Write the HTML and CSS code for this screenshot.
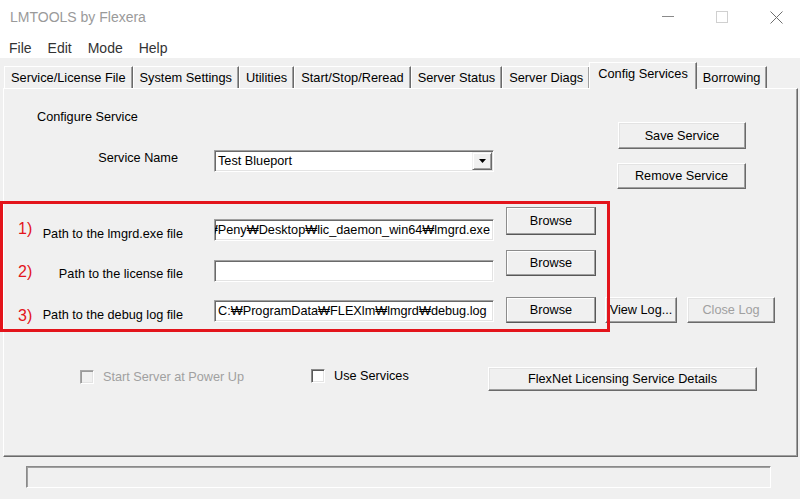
FILE: index.html
```html
<!DOCTYPE html>
<html lang="en">
<head>
<meta charset="utf-8">
<title>LMTOOLS by Flexera</title>
<link rel="stylesheet" href="styles.css">
</head>
<body>
<div class="window">
  <div class="titlebar">
    <span class="title">LMTOOLS by Flexera</span>
    <div class="controls">
      <svg class="ctl" width="12" height="12" viewBox="0 0 12 12"><path d="M0 5.5H12" stroke="#8a8a8a" stroke-width="1"/></svg>
      <svg class="ctl" width="12" height="12" viewBox="0 0 12 12"><rect x="0.5" y="0.5" width="11" height="11" fill="none" stroke="#d0d0d0" stroke-width="1"/></svg>
      <svg class="ctl" width="13" height="13" viewBox="0 0 13 13"><path d="M0.5 0.5L12.5 12.5M12.5 0.5L0.5 12.5" stroke="#6e6e6e" stroke-width="1"/></svg>
    </div>
  </div>

  <div class="menubar">
    <span>File</span><span>Edit</span><span>Mode</span><span>Help</span>
  </div>

  <div class="tabstrip">
    <div class="tab">Service/License File</div>
    <div class="tab">System Settings</div>
    <div class="tab">Utilities</div>
    <div class="tab">Start/Stop/Reread</div>
    <div class="tab">Server Status</div>
    <div class="tab">Server Diags</div>
    <div class="tab active">Config Services</div>
    <div class="tab">Borrowing</div>
  </div>

  <div class="panel">
    <div class="top">
      <div class="top-left">
        <div class="cfg-title">Configure Service</div>
        <div class="svc-row">
          <div class="svc-label">Service Name</div>
          <div class="field combo">
            <span class="combo-text">Test Blueport</span>
            <span class="combo-btn"><svg width="7" height="4" viewBox="0 0 7 4"><path d="M0 0H7L3.5 4Z" fill="#000"/></svg></span>
          </div>
        </div>
      </div>
      <div class="top-right">
        <div class="btn save">Save Service</div>
        <div class="btn remove">Remove Service</div>
      </div>
    </div>

    <div class="path-row r1">
      <span class="num">1)</span>
      <span class="plabel">Path to the lmgrd.exe file</span>
      <div class="field scroll"><span class="ftext">C:₩Users₩Peny₩Desktop₩lic_daemon_win64₩lmgrd.exe</span></div>
      <div class="btn browse">Browse</div>
    </div>

    <div class="path-row r2">
      <span class="num">2)</span>
      <span class="plabel">Path to the license file</span>
      <div class="field"></div>
      <div class="btn browse">Browse</div>
    </div>

    <div class="path-row r3">
      <span class="num">3)</span>
      <span class="plabel">Path to the debug log file</span>
      <div class="field"><span class="ftext">C:₩ProgramData₩FLEXlm₩lmgrd₩debug.log</span></div>
      <div class="btn browse">Browse</div>
      <div class="btn view">View Log...</div>
      <div class="btn closelog">Close Log</div>
    </div>

    <div class="check-row">
      <label class="check disabled"><span class="box"></span><span>Start Server at Power Up</span></label>
      <label class="check uses"><span class="box"></span><span>Use Services</span></label>
      <div class="btn flexnet">FlexNet Licensing Service Details</div>
    </div>
  </div>

  <div class="statusbar"><div class="status-box"></div></div>

  <div class="annot"></div>
</div>
</body>
</html>
```

FILE: styles.css
```css
html, body {
  margin: 0;
  padding: 0;
}
body {
  width: 800px;
  height: 499px;
  overflow: hidden;
  background: #f0f0f0;
  font-family: "Liberation Sans", Arial, "Noto Sans CJK KR", sans-serif;
  font-size: 12.7px;
  color: #000;
}
.window {
  position: relative;
  height: 499px;
}

/* title bar */
.titlebar {
  height: 34px;
  background: #fff;
  display: flex;
  align-items: center;
  padding-left: 10px;
}
.title {
  font-size: 14px;
  color: #9a9a9a;
}
.controls {
  margin-left: auto;
  display: flex;
  align-items: center;
  gap: 42px;
  padding-right: 17px;
}
.ctl { display: block; }

/* menu */
.menubar {
  height: 24px;
  box-sizing: border-box;
  padding: 4px 0 0 9px;
  line-height: 20px;
  background: #fff;
  display: flex;
  gap: 16px;
  font-size: 14px;
  color: #333;
}

/* tabs */
.tabstrip {
  height: 30px;
  box-sizing: border-box;
  display: flex;
  align-items: flex-end;
  padding-left: 4px;
  font-size: 12.8px;
}
.tab {
  height: 22px;
  box-sizing: border-box;
  line-height: 21px;
  padding: 0 6px;
  border: 1px solid;
  border-bottom: none;
  border-color: #fff #6a6a6a transparent #fff;
  box-shadow: inset -1px 0 #a0a0a0;
  white-space: nowrap;
}
.tab.active {
  position: relative;
  height: 27px;
  line-height: 22px;
  padding: 0 8px;
  margin: 0 -1px -1px;
  background: #f0f0f0;
}

/* panel */
.panel {
  height: 369px;
  box-sizing: border-box;
  margin: 0 2px 0 3px;
  border: 1px solid;
  border-color: #fff #6a6a6a #6a6a6a #fff;
  box-shadow: inset -1px -1px #a0a0a0;
}
.top {
  display: flex;
  height: 118px;
}
.top-left {
  width: 614px;
}
.cfg-title {
  padding: 20px 0 0 33px;
  line-height: 16px;
}
.svc-row {
  display: flex;
  margin-top: 25px;
}
.svc-label {
  width: 174px;
  text-align: right;
  line-height: 16px;
}
.top-right {
  display: flex;
  flex-direction: column;
  padding-top: 33px;
}

/* fields */
.field {
  width: 280px;
  height: 22px;
  box-sizing: border-box;
  background: #fff;
  border: 1px solid;
  border-color: #a0a0a0 #fff #fff #a0a0a0;
  box-shadow: inset 1px 1px #6a6a6a, inset -1px -1px #e3e3e3;
  display: flex;
  align-items: center;
  padding: 0 3px;
  overflow: hidden;
  white-space: nowrap;
}
.field.scroll {
  justify-content: flex-end;
}
.combo {
  margin-left: 36px;
  padding-right: 1px;
  align-items: stretch;
}
.combo-text {
  flex: 1;
  display: flex;
  align-items: center;
}
.combo-btn {
  width: 20px;
  margin: 1px 0;
  box-sizing: border-box;
  background: #f0f0f0;
  border: 1px solid;
  border-color: #f0f0f0 #6a6a6a #6a6a6a #f0f0f0;
  box-shadow: inset 1px 1px #fff, inset -1px -1px #a0a0a0;
  display: flex;
  align-items: center;
  justify-content: center;
}
.combo-btn svg { display: block; }

/* buttons */
.btn {
  box-sizing: border-box;
  height: 26px;
  background: #f0f0f0;
  border: 1px solid;
  border-color: #fff #6a6a6a #6a6a6a #fff;
  box-shadow: inset -1px -1px #a0a0a0, inset 1px 1px #e3e3e3;
  display: flex;
  align-items: center;
  justify-content: center;
  white-space: nowrap;
}
.save {
  width: 128px;
  height: 27px;
}
.remove {
  width: 129px;
  margin: 14px 0 0 -1px;
}

/* path rows */
.path-row {
  display: flex;
  align-items: flex-end;
  padding-left: 14px;
}
.r1 { height: 35px; }
.r2 { height: 32px; margin-top: 8px; }
.r3 { height: 26px; margin-top: 15px; }
.num {
  width: 22px;
  color: #e3141b;
  font-size: 16px;
  line-height: 20px;
}
.r1 .num { margin-bottom: 3px; }
.r3 .num { margin-bottom: -3px; }
.plabel {
  width: 143px;
  text-align: right;
  line-height: 16px;
}
.path-row .field {
  margin-left: 31px;
}
.r1 .field { margin-bottom: 1px; }
.r3 .field { margin-bottom: 1px; }
.path-row .btn {
  align-self: flex-start;
}
.browse {
  margin-left: 12px;
  width: 90px;
  border-color: #8c8c8c #585858 #585858 #8c8c8c;
  box-shadow: inset -1px -1px #a0a0a0, inset 1px 1px #fff;
}
.r1 .browse { height: 28px; }
.view {
  margin-left: 9px;
  width: 72px;
}
.closelog {
  margin-left: 10px;
  width: 88px;
  color: #a0a0a0;
}

/* check row */
.check-row {
  display: flex;
  margin-top: 44px;
  height: 24px;
  padding-left: 76px;
}
.check {
  display: flex;
  align-items: center;
  gap: 9px;
  height: 16px;
  margin-top: 2px;
  white-space: nowrap;
}
.check.disabled {
  width: 231px;
  color: #a0a0a0;
}
.check.uses {
  width: 177px;
  margin-top: 1px;
}
.box {
  width: 14px;
  height: 14px;
  box-sizing: border-box;
  background: #fff;
  border: 1px solid;
  border-color: #8a8a8a #fff #fff #8a8a8a;
  box-shadow: inset 1px 1px #5a5a5a, inset -1px -1px #e3e3e3;
}
.check.disabled .box {
  background: #f0f0f0;
  border-color: #a8a8a8 #fff #fff #a8a8a8;
  box-shadow: inset 1px 1px #9a9a9a, inset -1px -1px #e3e3e3;
}
.flexnet {
  width: 269px;
  height: 24px;
}

/* status bar */
.statusbar {
  padding: 9px 0 0 26px;
}
.status-box {
  width: 745px;
  height: 22px;
  box-sizing: border-box;
  border: 1px solid;
  border-color: #8a8a8a #fff #fff #8a8a8a;
  box-shadow: inset 1px 1px #a0a0a0;
}

/* red annotation frame drawn over the screenshot */
.annot {
  position: absolute;
  left: 0;
  top: 201px;
  width: 610px;
  height: 131px;
  box-sizing: border-box;
  border: 3px solid #e3141b;
  pointer-events: none;
}
```
